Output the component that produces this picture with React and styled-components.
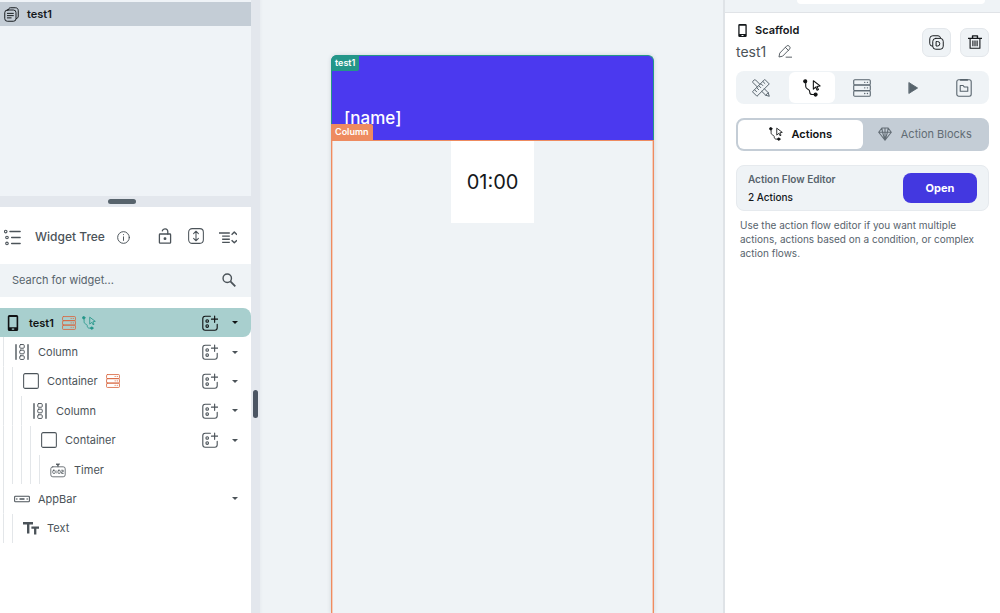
import React from 'react';
import styled, { createGlobalStyle } from 'styled-components';

const GlobalStyle = createGlobalStyle`
  * {
    box-sizing: border-box;
  }

  body {
    margin: 0;
    background: #eff3f6;
    color: #4b5359;
    font-family: Inter, 'Liberation Sans', sans-serif;
    font-size: 11px;
  }

  button,
  input {
    font: inherit;
    color: inherit;
    border: none;
    padding: 0;
    background: none;
  }

  svg {
    display: block;
    flex: none;
  }
`;

const Icon = styled.svg.attrs((props) => ({
  viewBox: '0 0 20 20',
  fill: 'none',
  stroke: 'currentColor',
  strokeWidth: props.strokeWidth || 1.3,
  strokeLinecap: props.strokeLinecap || 'round',
  strokeLinejoin: 'round',
  'aria-hidden': true,
}))`
  width: ${({ $size }) => $size || 16}px;
  height: ${({ $size }) => $size || 16}px;
  color: ${({ $color }) => $color || 'inherit'};
`;

const PagesIcon = (props) => (
  <Icon {...props}>
    <path d="M6 3.8C6 2 7 1 8.800 1H15c2.600 0 4 1.400 4 4v7c0 2-.9 3.200-2.600 3.600" />
    <rect x="1" y="4" width="15" height="15" rx="3.500" />
    <path d="M4.500 8.500h8M4.500 11.500h8M4.500 14.500h5" />
  </Icon>
);
const PhoneIcon = (props) => (
  <Icon {...props}>
    <path
      fill="currentColor"
      stroke="none"
      fillRule="evenodd"
      d="M5.500 0h9Q16.500 0 16.500 2v16Q16.500 20 14.500 20h-9Q3.500 20 3.500 18V2Q3.500 0 5.500 0ZM5.500 2.600v12.600h9V2.600ZM8.500 17v1.300h3V17Z"
    />
  </Icon>
);
const ServerIcon = (props) => (
  <Icon {...props} strokeWidth="1.200">
    <rect x="0.800" y="0.800" width="18.400" height="5.800" rx="1.200" />
    <rect x="0.800" y="6.600" width="18.400" height="6.400" rx="1.200" />
    <rect x="0.800" y="13" width="18.400" height="6.200" rx="1.200" />
    <path d="M13 3.700h.1M16 3.700h.1M13 9.800h.1M16 9.800h.1M13 16.100h.1M16 16.100h.1" strokeWidth="1.500" />
  </Icon>
);
const FlowIcon = (props) => (
  <Icon {...props} strokeWidth="1.200">
    <circle cx="2.500" cy="2.500" r="1.700" fill="currentColor" />
    <circle cx="14" cy="17.300" r="1.700" fill="currentColor" />
    <path d="M3 4v4c0 2 .8 2.800 2.400 3.500S7.500 13 7.500 14.400s1 2.900 2.600 2.900H14" />
    <path d="M11.500 2l7.500 5.700-3.500.6 1.700 3.500-1.500.7-1.700-3.500-2.500 2.200Z" />
  </Icon>
);
const AddIcon = (props) => (
  <Icon {...props} strokeWidth="1.400">
    <path d="M10.500 1.500H4Q1 1.500 1 4.500v11.500q0 3 3 3h12q3 0 3-3v-4.500" />
    <path d="M15.800 1.200v8M11.800 5.200h8" />
    <circle cx="6.500" cy="7.500" r="1.600" />
    <circle cx="6.500" cy="13.800" r="1.600" />
  </Icon>
);
const ColumnIcon = (props) => (
  <Icon {...props} strokeWidth="1.200">
    <path d="M2.500 1v18M17.500 1v18" strokeWidth="1.700" />
    <rect x="7.200" y="0.700" width="5.600" height="4.600" rx="1.200" />
    <rect x="7.200" y="7.700" width="5.600" height="4.600" rx="1.200" />
    <rect x="7.200" y="14.700" width="5.600" height="4.600" rx="1.200" />
  </Icon>
);
const ContainerIcon = (props) => (
  <Icon {...props}>
    <rect x="0.800" y="0.800" width="18.400" height="18.400" rx="1.800" />
  </Icon>
);
const TimerIcon = (props) => (
  <Icon {...props} strokeWidth="1">
    <rect x="1" y="6" width="18" height="12.500" rx="2.500" />
    <path d="M8 2.500h4L10 4.300Z" fill="currentColor" />
    <path d="M10 4.300V6" />
    <rect x="3.500" y="10.300" width="3" height="4" rx="1" />
    <path d="M8.300 11.300v.1M8.300 13.500v.1" />
    <rect x="10" y="10.300" width="2.800" height="4" rx="1" />
    <path d="M14.500 10.300h2v2h-2v2h2" />
  </Icon>
);
const AppBarIcon = (props) => (
  <Icon {...props}>
    <rect x="0.800" y="6.500" width="18.400" height="7" rx="1" />
    <path d="M3.500 10h.1M7.500 10h5M16.400 10h.1" strokeWidth="1.800" />
  </Icon>
);
const TextIcon = (props) => (
  <Icon {...props}>
    <path
      fill="currentColor"
      stroke="none"
      d="M0 2.500h12.500v3H8V17H5V5.500H0ZM10.500 8H20v2.800h-3.300V18h-2.900v-7.200h-3.300Z"
    />
  </Icon>
);
const TreeIcon = (props) => (
  <Icon {...props}>
    <circle cx="2" cy="3" r="1.500" />
    <circle cx="3.500" cy="10" r="1.500" />
    <circle cx="3.500" cy="17" r="1.500" />
    <path d="M7 3h12M9 10h10M9 17h10" strokeWidth="1.600" />
  </Icon>
);
const InfoIcon = (props) => (
  <Icon {...props} strokeWidth="1.500">
    <circle cx="10" cy="10" r="9" />
    <path d="M10 9v5.500M10 5.500v.2" />
  </Icon>
);
const LockIcon = (props) => (
  <Icon {...props} strokeWidth="1.600">
    <rect x="3" y="7.500" width="14" height="11.500" rx="1" />
    <path d="M13.500 7.500V4.300a3.500 3.500 0 0 0-6.900-.6" />
    <circle cx="10" cy="13.300" r="1" fill="currentColor" />
  </Icon>
);
const ExpandIcon = (props) => (
  <Icon {...props}>
    <rect x="0.800" y="0.800" width="18.400" height="18.400" rx="4.500" />
    <path d="M10 4.300v11.400M7 7l3-3 3 3M7 13l3 3 3-3" />
  </Icon>
);
const SortIcon = (props) => (
  <Icon {...props} strokeWidth="1.600" strokeLinecap="butt">
    <path d="M0 5.500h12M3.500 9h8.500M3.500 12.500h8.500M3.500 16h8.500" />
    <path d="M14 7.500L17 4.500l3 3M14 13.500l3 3 3-3" />
  </Icon>
);
const SearchIcon = (props) => (
  <Icon {...props} strokeWidth="2" strokeLinecap="butt">
    <circle cx="7.500" cy="7.500" r="6" />
    <path d="M12 12l7 7" strokeWidth="2.600" />
  </Icon>
);
const EditIcon = (props) => (
  <Icon {...props}>
    <path d="M1.500 18l1-5L12.200 3q2-1.800 3.800 0l.6.700q1.600 1.700 0 3.500L7 17Z M10.500 4.800l4.500 4.500M11.500 18.800h8" />
  </Icon>
);
const CopyIcon = (props) => (
  <Icon {...props}>
    <path d="M4.500 15Q1 14.800 1 11.500V5q0-4 4-4h7q3 0 3.500 3" />
    <rect x="5" y="4.500" width="14" height="14.500" rx="4" />
    <path d="M10 8.700h1.400q3 0 3 3t-3 3H10Z" />
  </Icon>
);
const TrashIcon = (props) => (
  <Icon {...props} strokeWidth="1.600" strokeLinecap="butt">
    <path d="M0 4.800h20M6.500 4.500V1.200h7v3.300" strokeWidth="2" />
    <path d="M3 5v14h14V5M7 8v8M10 8v8M13 8v8" />
  </Icon>
);
const DesignIcon = (props) => (
  <Icon {...props} strokeWidth="1.100">
    <path d="M14.500 0.800l4.700 4.700L5.500 19.200 0.800 14.500ZM12.300 3l2 2M10 5.300l2 2M7.700 7.600l2 2M5.400 9.900l2 2M3.100 12.200l2 2" />
    <path d="M6.200 9.100L1 3.900q-.5-.7 0-1.400l1.500-1.500q.7-.5 1.400 0L9.100 6.200M13.800 10.900l4.200 4.300 1.200 4-4-1.200-4.300-4.200M15.200 18l2.800-2.800" />
  </Icon>
);
const PlayIcon = (props) => (
  <Icon {...props}>
    <path d="M4.500 2.500L16.500 10l-12 7.500Z" fill="currentColor" />
  </Icon>
);
const DocsIcon = (props) => (
  <Icon {...props} strokeWidth="1.200">
    <rect x="2" y="0.800" width="16" height="18.400" rx="2.200" />
    <path d="M6.500 1h7" strokeWidth="2" />
    <path d="M5.800 7.200h3.200l1.200 1.600h4v4.900H5.800Z" />
  </Icon>
);
const GemIcon = (props) => (
  <Icon {...props} strokeWidth="1.500">
    <path d="M5.500 1.500h9L19 7.500l-9 11.500L1 7.500ZM1 7.500h18M5.500 1.500L6.500 7.500l3.500 11.500 3.500-11.500 1-6M10 1.500V19" />
  </Icon>
);

const Page = styled.div`
  display: grid;
  grid-template-columns: 251px 12px 1fr 277px;
  height: 100vh;
  overflow: hidden;
`;
const LeftPanel = styled.aside`
  display: flex;
  flex-direction: column;
  background: #fff;
`;
const PageList = styled.nav`
  height: 196px;
  padding-top: 2px;
  background: #eff3f7;
`;
const PageLink = styled.a`
  display: flex;
  align-items: center;
  gap: 8px;
  height: 24px;
  padding-left: 4px;
  background: #c4cdd6;
  color: #14181b;
  font-weight: 600;
  text-decoration: none;
`;
const HorizontalSplitter = styled.div`
  display: flex;
  justify-content: center;
  align-items: center;
  height: 11px;
  padding-right: 8px;
  background: #e3e7ed;
`;
const VerticalSplitter = styled.div`
  padding: 390px 0 0 2px;
  background: linear-gradient(to right, #e3e7ed 9px, #e9edf1 9px, #eff3f6);
`;
const Grip = styled.div`
  width: ${({ $vertical }) => ($vertical ? 5 : 28)}px;
  height: ${({ $vertical }) => ($vertical ? 28 : 5)}px;
  border-radius: 3px;
  background: ${({ $vertical }) => ($vertical ? '#4b5563' : '#57636c')};
`;
const TreeHeader = styled.div`
  display: flex;
  align-items: center;
  height: 57px;
  padding: 3px 14px 0 4px;
`;
const TreeTitle = styled.h2`
  margin: 0 12px 0 14px;
  font-size: 12px;
  line-height: 16px;
  font-weight: 500;
`;
const TreeActions = styled.div`
  display: flex;
  gap: 15px;
  margin-left: auto;
`;
const IconButton = styled.button`
  display: flex;
`;
const SearchBar = styled.label`
  display: flex;
  align-items: center;
  height: 33px;
  padding: 0 15px 2px 12px;
  background: #eff3f6;
`;
const SearchInput = styled.input`
  flex: 1;
  min-width: 0;
  outline: none;

  &::placeholder {
    color: #57636c;
    opacity: 1;
  }
`;
const Tree = styled.ul`
  display: grid;
  grid-auto-rows: 1fr;
  height: 235px;
  margin: 11px 0 0;
  padding: 0;
  list-style: none;
`;
const TreeRow = styled.li`
  display: flex;
  align-items: center;
  padding-right: 11px;
  border-radius: 0 8px 8px 0;
  background: ${({ $selected }) => ($selected ? '#a8cfce' : 'none')};
  color: ${({ $selected }) => ($selected ? '#101213' : '#4b5359')};
  font-weight: ${({ $selected }) => ($selected ? 600 : 400)};
`;
const Guide = styled.span`
  align-self: stretch;
  width: 9px;
  border-left: 3px solid transparent;
  background: linear-gradient(#e3e6e9, #e3e6e9) left / 1px 100% no-repeat;
`;
const NodeIcon = styled.span`
  display: flex;
  justify-content: center;
  width: 18px;
  margin: 0 7px 0 4px;
`;
const Badges = styled.span`
  display: flex;
  gap: 6px;
  margin-left: 8px;
`;
const RowActions = styled.span`
  display: flex;
  align-items: center;
  gap: 12px;
  margin-left: auto;
`;
const Caret = styled.span`
  display: block;
  margin: 0 2px;
  border: 3px solid transparent;
  border-top-color: currentColor;
  border-bottom: 0;
`;

const Canvas = styled.main`
  display: flex;
  padding: 55px 69px 0 68px;
`;
const Device = styled.div`
  display: flex;
  flex: 1;
  flex-direction: column;
  border-radius: 6px 6px 0 0;
  box-shadow: 0 0 4px #cbd2d8;
`;
const AppBar = styled.header`
  position: relative;
  display: flex;
  align-items: flex-end;
  height: 85px;
  padding: 0 12px 11px;
  border: 1px solid #249689;
  border-width: 1px 1px 0;
  border-radius: 6px 6px 0 0;
  background: #4b39ef;
  color: #fff;
`;
const AppBarTitle = styled.h1`
  margin: 0;
  font-size: 17px;
  line-height: 22px;
  font-weight: 500;
`;
const Tag = styled.span`
  position: absolute;
  left: -1px;
  ${({ $bottom }) => ($bottom ? 'bottom: 0;' : 'top: -1px;')}
  padding: 0 4px;
  border-radius: ${({ $bottom }) => ($bottom ? '0 2px 0 0' : '6px 0 2px 0')};
  background: ${({ $bottom }) => ($bottom ? '#ee8b60' : '#249689')};
  font-size: 9px;
  line-height: 16px;
  font-weight: 600;
`;
const Body = styled.div`
  display: flex;
  flex: 1;
  flex-direction: column;
  align-items: center;
  border: 1px solid #ee8b60;
  border-width: 1px 1px 0;
  box-shadow: inset 1px 0 #f5cdbb, inset -1px 0 #f5cdbb;
  background: #eff3f6;
`;
const TimerBox = styled.div`
  display: grid;
  place-items: center;
  width: 83px;
  height: 82px;
  background: #fff;
  color: #14181b;
  font-size: 20px;
`;

const RightPanel = styled.aside`
  border-left: 2px solid #dfe3e7;
  background: #fff;
`;
const TopStrip = styled.div`
  height: 13px;
  padding: 0 15px 0 72px;
  border-bottom: 1px solid #e0e3e7;
  background: #eff3f6;

  &::before {
    content: '';
    display: block;
    height: 4px;
    border-radius: 0 0 5px 5px;
    background: #fff;
  }
`;
const Properties = styled.div`
  padding: 8px 11px 0;
`;
const WidgetHeader = styled.div`
  display: flex;
  justify-content: space-between;
  align-items: center;
  height: 42px;
`;
const WidgetType = styled.div`
  display: flex;
  align-items: center;
  gap: 6px;
  height: 18px;
  color: #14181b;
  font-weight: 600;
`;
const WidgetName = styled.div`
  display: flex;
  align-items: center;
  gap: 12px;
  height: 24px;
  font-size: 14px;
`;
const HeaderButtons = styled.div`
  display: flex;
  gap: 9px;
`;
const SquareButton = styled.button`
  display: grid;
  place-items: center;
  width: 29px;
  height: 29px;
  border: 1px solid #e3e7eb;
  border-radius: 7px;
  background: #eff3f6;
  color: #14181b;
`;
const Tabs = styled.div`
  display: grid;
  grid-template-columns: repeat(5, 1fr);
  height: 33px;
  margin-top: 8px;
  padding: 1px 0;
  border-radius: 8px;
  background: #eff3f6;
`;
const Tab = styled.button`
  display: grid;
  place-items: center;
  margin: 0 2px;
  border-radius: 6px;
  background: ${({ $active }) => ($active ? '#fff' : 'none')};
  color: ${({ $active }) => ($active ? '#101213' : '#57636c')};
`;
const Switcher = styled.div`
  display: grid;
  grid-template-columns: 1fr 1fr;
  height: 33px;
  margin-top: 14px;
  border: 2px solid #c4cdd6;
  border-radius: 8px;
  background: #c4cdd6;
`;
const SwitchButton = styled.button`
  display: flex;
  justify-content: center;
  align-items: center;
  gap: 9px;
  padding-bottom: 1px;
  border-radius: 6px;
  background: ${({ $active }) => ($active ? '#fff' : 'none')};
  color: ${({ $active }) => ($active ? '#101213' : '#626c74')};
  font-weight: ${({ $active }) => ($active ? 600 : 400)};
`;
const FlowCard = styled.section`
  display: flex;
  justify-content: space-between;
  align-items: center;
  height: 46px;
  margin-top: 14px;
  padding: 0 11px 1px;
  border: 1px solid #e6eaee;
  border-radius: 8px;
  background: #eff3f6;
  font-size: 10px;
  line-height: 18px;
`;
const FlowTitle = styled.div`
  color: #57636c;
  font-weight: 600;
`;
const FlowCount = styled.div`
  color: #14181b;
  font-weight: 500;
`;
const OpenButton = styled.button`
  width: 74px;
  height: 30px;
  border-radius: 8px;
  background: #4338e0;
  color: #fff;
  font-size: 11px;
  font-weight: 700;
`;
const Hint = styled.p`
  margin: 7px 4px 0;
  color: #57636c;
  font-size: 10px;
  line-height: 14px;
`;

const nodes = [
  { label: 'test1', depth: 0, icon: PhoneIcon, badges: [ServerIcon, FlowIcon], add: true, caret: true },
  { label: 'Column', depth: 1, icon: ColumnIcon, add: true, caret: true },
  { label: 'Container', depth: 2, icon: ContainerIcon, badges: [ServerIcon], add: true, caret: true },
  { label: 'Column', depth: 3, icon: ColumnIcon, add: true, caret: true },
  { label: 'Container', depth: 4, icon: ContainerIcon, add: true, caret: true },
  { label: 'Timer', depth: 5, icon: TimerIcon },
  { label: 'AppBar', depth: 1, icon: AppBarIcon, caret: true },
  { label: 'Text', depth: 2, icon: TextIcon },
];

const tabs = [
  { label: 'Properties', icon: DesignIcon },
  { label: 'Actions', icon: FlowIcon },
  { label: 'Backend query', icon: ServerIcon },
  { label: 'Animations', icon: PlayIcon, size: 14 },
  { label: 'Documentation', icon: DocsIcon },
];

function TreeNode({ node }) {
  const NodeGlyph = node.icon;

  return (
    <TreeRow $selected={node.depth === 0}>
      {Array.from({ length: node.depth }, (_, i) => (
        <Guide key={i} />
      ))}
      <NodeIcon>
        <NodeGlyph $size={16} />
      </NodeIcon>
      <span>{node.label}</span>
      {node.badges && (
        <Badges>
          {node.badges.map((Badge, i) => (
            <Badge key={i} $size={14} $color={i === 0 ? '#d9663f' : '#249689'} />
          ))}
        </Badges>
      )}
      <RowActions>
        {node.add && (
          <IconButton aria-label={`Add to ${node.label}`}>
            <AddIcon $size={16} />
          </IconButton>
        )}
        {node.caret && (
          <IconButton aria-label={`Toggle ${node.label}`}>
            <Caret />
          </IconButton>
        )}
      </RowActions>
    </TreeRow>
  );
}

function App() {
  return (
    <>
      <GlobalStyle />
      <Page>
        <LeftPanel>
          <PageList>
            <PageLink href="#test1">
              <PagesIcon $size={15} />
              test1
            </PageLink>
          </PageList>
          <HorizontalSplitter>
            <Grip />
          </HorizontalSplitter>
          <TreeHeader>
            <TreeIcon $size={17} />
            <TreeTitle>Widget Tree</TreeTitle>
            <InfoIcon $size={13} />
            <TreeActions>
              <IconButton aria-label="Lock">
                <LockIcon $size={16} />
              </IconButton>
              <IconButton aria-label="Expand">
                <ExpandIcon $size={16} />
              </IconButton>
              <IconButton aria-label="Collapse all">
                <SortIcon $size={18} />
              </IconButton>
            </TreeActions>
          </TreeHeader>
          <SearchBar>
            <SearchInput aria-label="Search for widget" placeholder="Search for widget..." />
            <SearchIcon $size={14} />
          </SearchBar>
          <Tree>
            {nodes.map((node, i) => (
              <TreeNode key={i} node={node} />
            ))}
          </Tree>
        </LeftPanel>
        <VerticalSplitter>
          <Grip $vertical />
        </VerticalSplitter>
        <Canvas>
          <Device>
            <AppBar>
              <AppBarTitle>[name]</AppBarTitle>
              <Tag>test1</Tag>
              <Tag $bottom>Column</Tag>
            </AppBar>
            <Body>
              <TimerBox>01:00</TimerBox>
            </Body>
          </Device>
        </Canvas>
        <RightPanel>
          <TopStrip />
          <Properties>
            <WidgetHeader>
              <div>
                <WidgetType>
                  <PhoneIcon $size={13} />
                  Scaffold
                </WidgetType>
                <WidgetName>
                  test1
                  <IconButton aria-label="Rename">
                    <EditIcon $size={14} />
                  </IconButton>
                </WidgetName>
              </div>
              <HeaderButtons>
                <SquareButton aria-label="Duplicate">
                  <CopyIcon $size={15} />
                </SquareButton>
                <SquareButton aria-label="Delete">
                  <TrashIcon $size={14} />
                </SquareButton>
              </HeaderButtons>
            </WidgetHeader>
            <Tabs role="tablist">
              {tabs.map(({ label, icon: TabIcon, size }) => (
                <Tab
                  key={label}
                  role="tab"
                  aria-label={label}
                  aria-selected={label === 'Actions'}
                  $active={label === 'Actions'}
                >
                  <TabIcon $size={size || 18} />
                </Tab>
              ))}
            </Tabs>
            <Switcher>
              <SwitchButton $active>
                <FlowIcon $size={14} />
                Actions
              </SwitchButton>
              <SwitchButton>
                <GemIcon $size={14} />
                Action Blocks
              </SwitchButton>
            </Switcher>
            <FlowCard>
              <div>
                <FlowTitle>Action Flow Editor</FlowTitle>
                <FlowCount>2 Actions</FlowCount>
              </div>
              <OpenButton>Open</OpenButton>
            </FlowCard>
            <Hint>
              Use the action flow editor if you want multiple actions, actions based on a condition, or complex
              action flows.
            </Hint>
          </Properties>
        </RightPanel>
      </Page>
    </>
  );
}

export default App;
